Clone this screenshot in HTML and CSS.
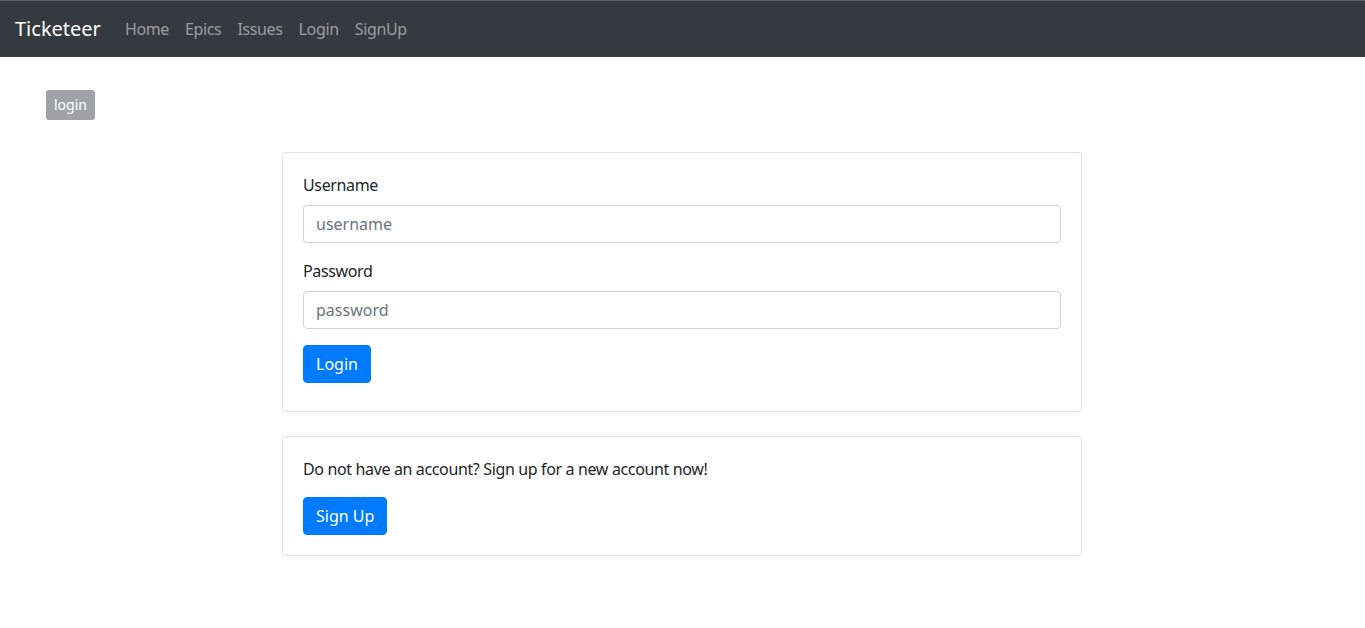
FILE: index.html
```html
<!DOCTYPE html>
<html lang="en">
<head>
<meta charset="utf-8">
<title>Ticketeer</title>
<link rel="stylesheet" href="styles.css">
</head>
<body>
<nav class="navbar">
  <a class="brand" href="#">Ticketeer</a>
  <ul class="nav">
    <li><a href="#">Home</a></li>
    <li><a href="#">Epics</a></li>
    <li><a href="#">Issues</a></li>
    <li><a href="#">Login</a></li>
    <li><a href="#">SignUp</a></li>
  </ul>
</nav>
<main class="page">
  <div class="crumbs"><span class="crumb">login</span></div>
  <div class="card">
    <form class="card-body login-body">
      <div class="form-group">
        <label class="label">Username</label>
        <input class="input" type="text" placeholder="username">
      </div>
      <div class="form-group">
        <label class="label">Password</label>
        <input class="input" type="password" placeholder="password">
      </div>
      <button class="btn" type="button">Login</button>
    </form>
  </div>
  <div class="card">
    <div class="card-body">
      <p class="text">Do not have an account? Sign up for a new account now!</p>
      <button class="btn" type="button">Sign Up</button>
    </div>
  </div>
</main>
</body>
</html>
```
FILE: styles.css
```css
* { box-sizing: border-box; }
html, body { margin: 0; padding: 0; }
body {
  font-family: "Noto Sans", "Open Sans", sans-serif;
  font-size: 16px;
  line-height: 1.5;
  letter-spacing: -0.36px;
  color: #212529;
  background: #fff;
}
.navbar {
  display: flex;
  align-items: center;
  background: #343a40;
  border-top: 1px solid #5d6167;
  padding: 8px 15px;
  height: 57px;
}
.brand {
  color: #fff;
  text-decoration: none;
  font-size: 20px;
  line-height: 30px;
  letter-spacing: 0;
  margin-right: 16px;
}
.nav {
  display: flex;
  list-style: none;
  margin: 0;
  padding: 0;
}
.nav a {
  display: block;
  padding: 8px 8px;
  color: rgba(255,255,255,.5);
  text-decoration: none;
  font-size: 16px;
  line-height: 24px;
}
.page {
  padding: 33px 0 0;
  display: flex;
  flex-direction: column;
  align-items: center;
}
.crumbs {
  align-self: stretch;
  padding-left: 46px;
  margin-bottom: 32px;
}
.crumb {
  display: inline-block;
  background: #9fa3a7;
  color: #fff;
  font-size: 14px;
  line-height: 21px;
  letter-spacing: 0;
  padding: 4px 8px;
  border-radius: 3px;
  height: 30px;
}
.card {
  width: 800px;
  margin-right: 1px;
  border: 1px solid rgba(0,0,0,.125);
  border-radius: 4px;
  margin-bottom: 24px;
}
.card-body { padding: 20px; }
.login-body { padding-bottom: 28px; }
.form-group { margin-bottom: 16px; }
.label {
  display: block;
  margin-bottom: 8px;
  line-height: 24px;
}
.input {
  display: block;
  width: 100%;
  height: 38px;
  padding: 6px 12px;
  font: inherit;
  color: #495057;
  border: 1px solid #ced4da;
  border-radius: 4px;
  background: #fff;
}
.input::placeholder { color: #6c757d; opacity: 1; }
.btn {
  display: block;
  height: 38px;
  padding: 6px 12px;
  font: inherit;
  line-height: 24px;
  color: #fff;
  background: #007bff;
  border: 1px solid #007bff;
  border-radius: 4px;
}
.text { margin: 0 0 16px; }
```
